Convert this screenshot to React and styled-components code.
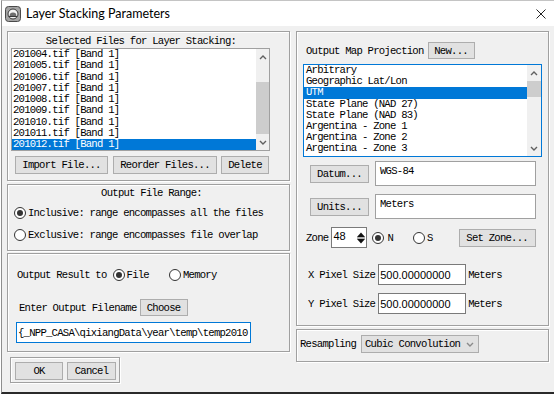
import React from 'react';
import styled, { createGlobalStyle } from 'styled-components';

const mono = '"Liberation Mono", "DejaVu Sans Mono", monospace';
const sans = '"Liberation Sans", Arial, sans-serif';

const GlobalStyle = createGlobalStyle`
  html, body {
    margin: 0;
    padding: 0;
    background: #ffffff;
  }
  body {
    font-family: ${mono};
    font-size: 10.6px;
    letter-spacing: -0.76px;
    color: #000;
  }
  * {
    box-sizing: border-box;
  }
`;

const Window = styled.div`
  width: 553px;
  height: 394px;
  margin-left: 1px;
  border-left: 1px solid #8e8e8e;
  border-top: 1px solid #c4c4c4;
  border-bottom: 2px solid #2a2a2a;
  background: #f0f0f0;
  display: flex;
  flex-direction: column;
  overflow: hidden;
`;

const TitleBar = styled.div`
  height: 25px;
  flex: none;
  background: #ffffff;
  display: flex;
  align-items: center;
  padding-left: 3px;
`;

const Title = styled.div`
  margin-left: 5px;
  font-family: Lato, "Noto Sans", sans-serif;
  font-size: 12.5px;
  letter-spacing: 0;
  color: #000;
`;

const Close = styled.div`
  margin-left: auto;
  margin-right: 8px;
  display: flex;
`;

const Body = styled.div`
  flex: 1;
  display: flex;
  gap: 6px;
  padding: 5px 0 0 5px;
`;

const Column = styled.div`
  width: ${(p) => p.$w}px;
  flex: none;
  display: flex;
  flex-direction: column;
`;

const Group = styled.div`
  border: 1px solid #a0a0a0;
  box-shadow: inset 1px 1px 0 #ffffff, 1px 1px 0 #ffffff;
  height: ${(p) => p.$h}px;
  flex: none;
  display: flex;
  flex-direction: column;
`;

const FilesGroup = styled(Group)`
  padding: 3px 18px 0 3px;
`;

const RangeGroup = styled(Group)`
  margin-top: 3px;
  padding: 2px 0 0 6px;
`;

const OutputGroup = styled(Group)`
  margin-top: 2px;
  padding: 14px 0 0 8px;
`;

const ActionGroup = styled(Group)`
  margin-top: 5px;
  margin-left: 3px;
  width: 110px;
  padding: 4px 0 0 4px;
  flex-direction: row;
  gap: 4px;
`;

const ProjectionGroup = styled(Group)`
  padding: 10px 0 0 6px;
`;

const ResampleGroup = styled(Group)`
  margin-top: 3px;
  padding: 5px 0 0 3px;
  flex-direction: row;
  align-items: flex-start;
`;

const GroupTitle = styled.div`
  height: 13px;
  line-height: 13px;
  text-align: center;
  white-space: pre;
`;

const Row = styled.div`
  display: flex;
  align-items: center;
  height: ${(p) => p.$h}px;
  margin-top: ${(p) => p.$mt || 0}px;
  padding-left: ${(p) => p.$pl || 0}px;
  gap: ${(p) => p.$gap || 0}px;
  flex: none;
`;

const Text = styled.span`
  white-space: pre;
  margin-left: ${(p) => p.$ml || 0}px;
`;

const Button = styled.button`
  font: inherit;
  letter-spacing: inherit;
  color: #000;
  width: ${(p) => p.$w}px;
  height: ${(p) => p.$h || 18}px;
  margin-left: ${(p) => p.$ml || 0}px;
  background: #e1e1e1;
  border: 1px solid #adadad;
  padding: 0;
  flex: none;
  white-space: pre;
`;

const Option = styled.label`
  display: inline-flex;
  align-items: center;
  gap: ${(p) => p.$gap || 2}px;
  margin-left: ${(p) => p.$ml || 0}px;
  white-space: pre;
`;

const Radio = styled.span`
  width: 12px;
  height: 12px;
  border-radius: 50%;
  border: 1px solid #333;
  background: #ffffff;
  display: inline-flex;
  align-items: center;
  justify-content: center;
  flex: none;

  &::after {
    content: '';
    width: 6px;
    height: 6px;
    border-radius: 50%;
    background: ${(p) => (p.$on ? '#333' : 'transparent')};
  }
`;

const ListBox = styled.div`
  display: flex;
  width: ${(p) => p.$w}px;
  height: ${(p) => p.$h}px;
  margin-top: ${(p) => p.$mt || 0}px;
  border: 1px solid ${(p) => (p.$focus ? '#0078d7' : '#a0a0a0')};
  background: #ffffff;
  flex: none;
`;

const Rows = styled.div`
  flex: 1;
  overflow: hidden;
`;

const Item = styled.div`
  height: ${(p) => p.$rh}px;
  line-height: ${(p) => p.$rh}px;
  padding-left: ${(p) => p.$pl}px;
  white-space: pre;
  background: ${(p) => (p.$sel ? '#0078d7' : 'transparent')};
  color: ${(p) => (p.$sel ? '#ffffff' : '#000')};
`;

const ScrollBar = styled.div`
  width: ${(p) => p.$w}px;
  flex: none;
  display: flex;
  flex-direction: column;
  background: #f0f0f0;
`;

const Arrow = styled.div`
  height: ${(p) => p.$h}px;
  flex: none;
  display: flex;
  align-items: center;
  justify-content: center;
`;

const Track = styled.div`
  flex: 1;
`;

const Thumb = styled.div`
  margin-top: ${(p) => p.$top}px;
  height: ${(p) => p.$h}px;
  background: #cdcdcd;
`;

const Field = styled.div`
  width: ${(p) => p.$w}px;
  height: ${(p) => p.$h}px;
  margin-left: ${(p) => p.$ml || 0}px;
  border: 1px solid #a0a0a0;
  background: #ffffff;
  padding: 3px 0 0 4px;
  white-space: pre;
  flex: none;
`;

const Input = styled.div`
  width: ${(p) => p.$w}px;
  height: ${(p) => p.$h}px;
  margin-left: ${(p) => p.$ml || 0}px;
  margin-top: ${(p) => p.$mt || 0}px;
  border: 1px solid ${(p) => (p.$focus ? '#0078d7' : '#7a7a7a')};
  background: #ffffff;
  padding-left: ${(p) => p.$pl || 1}px;
  display: flex;
  align-items: center;
  white-space: pre;
  overflow: hidden;
  flex: none;
  font-family: ${(p) => (p.$sans ? sans : 'inherit')};
  font-size: ${(p) => (p.$sans ? '11px' : 'inherit')};
  letter-spacing: ${(p) => (p.$sans ? '0' : 'inherit')};
`;

const Spinner = styled.div`
  width: 36px;
  height: 21px;
  margin-left: 3px;
  border: 1px solid #7a7a7a;
  background: #ffffff;
  display: flex;
  flex: none;
`;

const SpinValue = styled.div`
  flex: 1;
  padding: 2px 0 0 1px;
  font-family: ${sans};
  font-size: 11px;
  letter-spacing: 0;
`;

const SpinArrows = styled.div`
  width: 11px;
  display: flex;
  align-items: center;
  justify-content: center;
`;

const Dropdown = styled.div`
  width: 118px;
  height: 18px;
  margin-left: 5px;
  background: #e1e1e1;
  border: 1px solid #adadad;
  display: flex;
  align-items: center;
  justify-content: space-between;
  padding: 0 4px 0 3px;
  white-space: pre;
  flex: none;
`;

const Label = styled.span`
  white-space: pre;
  line-height: 18px;
`;

const Chevron = ({ down, color = '#606060' }) => (
  <svg width="8" height="5" viewBox="0 0 8 5">
    <polyline
      points={down ? '1,1 4,4 7,1' : '1,4 4,1 7,4'}
      fill="none"
      stroke={color}
      strokeWidth="1.4"
    />
  </svg>
);

const AppIcon = () => (
  <svg width="16" height="16" viewBox="0 0 16 16">
    <rect x="0.5" y="0.5" width="15" height="15" rx="3" fill="#a4a4a4" stroke="#4a4a4a" />
    <circle cx="8" cy="8" r="5" fill="#f4f4f4" stroke="#3a3a3a" />
    <path d="M4.6 10 A3.4 3.4 0 0 1 11.4 10 Z" fill="#6e6e6e" />
    <line x1="4" y1="10.5" x2="12" y2="10.5" stroke="#3a3a3a" />
  </svg>
);

const CloseIcon = () => (
  <svg width="10" height="10" viewBox="0 0 10 10">
    <path d="M0.5 0.5 L9.5 9.5 M9.5 0.5 L0.5 9.5" stroke="#222" strokeWidth="1" />
  </svg>
);

const SpinIcon = () => (
  <svg width="10" height="14" viewBox="0 0 10 14">
    <path d="M1 6 L5 1.5 L9 6 Z" fill="#111" />
    <line x1="1" y1="7" x2="9" y2="7" stroke="#666" />
    <path d="M1 8 L5 12.5 L9 8 Z" fill="#111" />
  </svg>
);

const files = [
  '201004.tif [Band 1]',
  '201005.tif [Band 1]',
  '201006.tif [Band 1]',
  '201007.tif [Band 1]',
  '201008.tif [Band 1]',
  '201009.tif [Band 1]',
  '201010.tif [Band 1]',
  '201011.tif [Band 1]',
  '201012.tif [Band 1]',
];

const projections = [
  'Arbitrary',
  'Geographic Lat/Lon',
  'UTM',
  'State Plane (NAD 27)',
  'State Plane (NAD 83)',
  'Argentina - Zone 1',
  'Argentina - Zone 2',
  'Argentina - Zone 3',
];

const App = () => {
  return (
    <>
      <GlobalStyle />
      <Window>
        <TitleBar>
          <AppIcon />
          <Title>Layer Stacking Parameters</Title>
          <Close>
            <CloseIcon />
          </Close>
        </TitleBar>
        <Body>
          <Column $w={283}>
            <FilesGroup $h={150}>
              <GroupTitle>Selected Files for Layer Stacking:</GroupTitle>
              <ListBox $w={259} $h={103}>
                <Rows>
                  {files.map((f, i) => (
                    <Item key={f} $rh={11.3} $pl={1} $sel={i === files.length - 1}>
                      {f}
                    </Item>
                  ))}
                </Rows>
                <ScrollBar $w={13}>
                  <Arrow $h={16}>
                    <Chevron />
                  </Arrow>
                  <Track>
                    <Thumb $top={17} $h={52} />
                  </Track>
                  <Arrow $h={16}>
                    <Chevron down />
                  </Arrow>
                </ScrollBar>
              </ListBox>
              <Row $h={18} $mt={5} $pl={4}>
                <Button $w={93}>Import File...</Button>
                <Button $w={104} $ml={5}>Reorder Files...</Button>
                <Button $w={48} $ml={4}>Delete</Button>
              </Row>
            </FilesGroup>

            <RangeGroup $h={67}>
              <GroupTitle>Output File Range:</GroupTitle>
              <Row $h={14} $mt={6}>
                <Option>
                  <Radio $on />
                  Inclusive: range encompasses all the files
                </Option>
              </Row>
              <Row $h={14} $mt={8}>
                <Option>
                  <Radio />
                  Exclusive: range encompasses file overlap
                </Option>
              </Row>
            </RangeGroup>

            <OutputGroup $h={99}>
              <Row $h={14}>
                <Text $ml={1}>Output Result to</Text>
                <Option $ml={6}>
                  <Radio $on />
                  File
                </Option>
                <Option $ml={20}>
                  <Radio />
                  Memory
                </Option>
              </Row>
              <Row $h={17} $mt={17}>
                <Text $ml={3}>Enter Output Filename</Text>
                <Button $w={48} $h={17} $ml={3}>Choose</Button>
              </Row>
              <Input $w={235} $h={21} $mt={6} $ml={0} $focus $pl={1}>
                {'{_NPP_CASA\\qixiangData\\year\\temp\\temp2010'}
              </Input>
            </OutputGroup>

            <ActionGroup $h={26}>
              <Button $w={48}>OK</Button>
              <Button $w={49}>Cancel</Button>
            </ActionGroup>
          </Column>

          <Column $w={253}>
            <ProjectionGroup $h={295}>
              <Row $h={17} $pl={3}>
                <Text>Output Map Projection</Text>
                <Button $w={47} $h={17} $ml={4}>New...</Button>
              </Row>
              <ListBox $w={239} $h={93} $mt={5} $focus>
                <Rows>
                  {projections.map((p, i) => (
                    <Item key={p} $rh={11.2} $pl={2} $sel={i === 2}>
                      {p}
                    </Item>
                  ))}
                </Rows>
                <ScrollBar $w={14}>
                  <Arrow $h={16}>
                    <Chevron />
                  </Arrow>
                  <Track>
                    <Thumb $top={0} $h={16} />
                  </Track>
                  <Arrow $h={16}>
                    <Chevron down />
                  </Arrow>
                </ScrollBar>
              </ListBox>
              <Row $h={25} $mt={4} $pl={7}>
                <Button $w={59}>Datum...</Button>
                <Field $w={161} $h={25} $ml={6}>WGS-84</Field>
              </Row>
              <Row $h={25} $mt={8} $pl={7}>
                <Button $w={59}>Units...</Button>
                <Field $w={161} $h={25} $ml={6}>Meters</Field>
              </Row>
              <Row $h={21} $mt={8} $pl={3}>
                <Text>Zone</Text>
                <Spinner>
                  <SpinValue>48</SpinValue>
                  <SpinArrows>
                    <SpinIcon />
                  </SpinArrows>
                </Spinner>
                <Option $ml={5} $gap={3}>
                  <Radio $on />
                  N
                </Option>
                <Option $ml={20}>
                  <Radio />
                  S
                </Option>
                <Button $w={77} $ml={26}>Set Zone...</Button>
              </Row>
              <Row $h={21} $mt={16} $pl={5}>
                <Text>X Pixel Size</Text>
                <Input $w={88} $h={21} $ml={3} $sans $pl={1}>500.00000000</Input>
                <Text $ml={2}>Meters</Text>
              </Row>
              <Row $h={21} $mt={8} $pl={5}>
                <Text>Y Pixel Size</Text>
                <Input $w={88} $h={21} $ml={3} $sans $pl={1}>500.00000000</Input>
                <Text $ml={2}>Meters</Text>
              </Row>
            </ProjectionGroup>

            <ResampleGroup $h={33}>
              <Label>Resampling</Label>
              <Dropdown>
                Cubic Convolution
                <Chevron down color="#8a8a8a" />
              </Dropdown>
            </ResampleGroup>
          </Column>
        </Body>
      </Window>
    </>
  );
};

export default App;
